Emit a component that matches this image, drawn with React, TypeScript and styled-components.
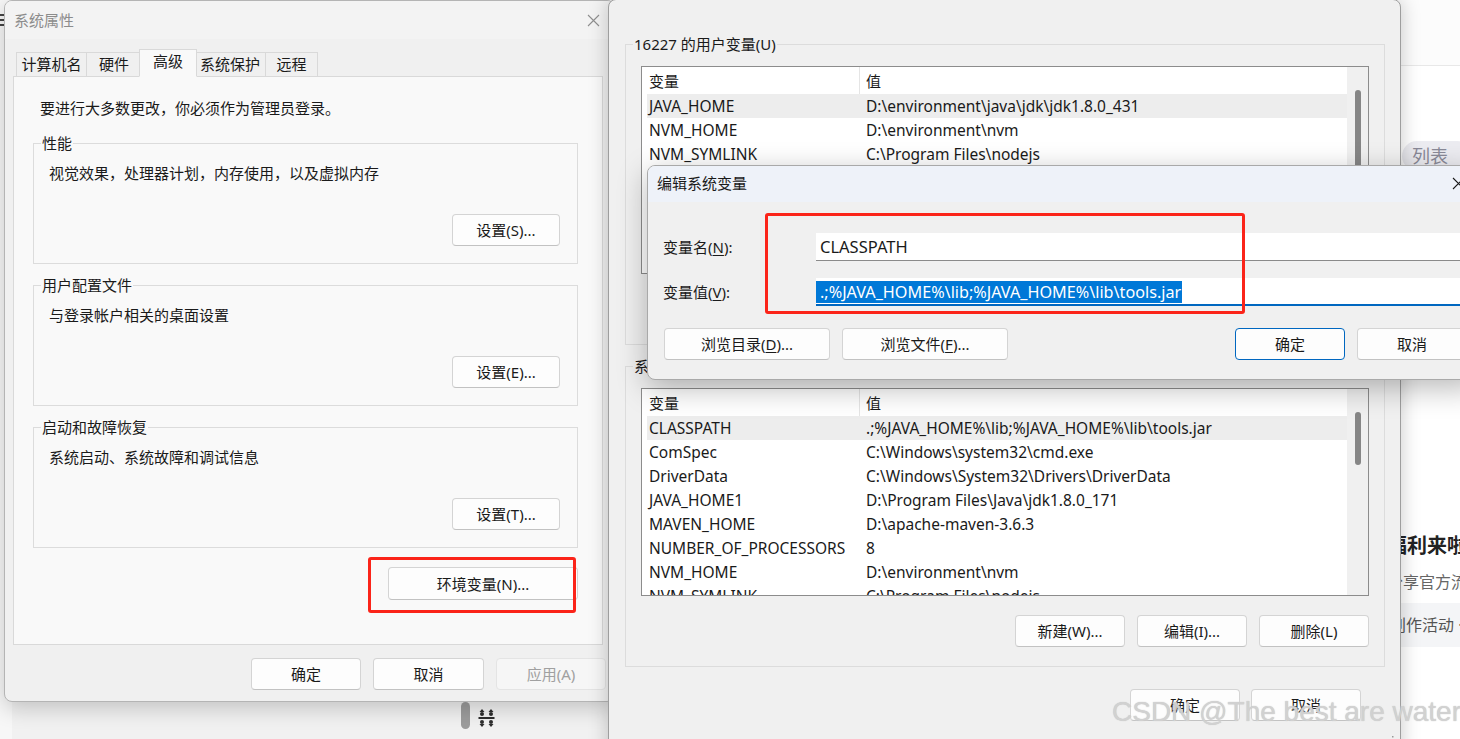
import React from "react";
import styled, { createGlobalStyle } from "styled-components";

const FONT = `"Noto Sans", "Noto Sans CJK SC", sans-serif`;

const GlobalStyle = createGlobalStyle`
  html, body { margin: 0; padding: 0; overflow: hidden; }
  body { font-family: ${FONT}; font-size: 15px; color: #1a1a1a; background: #f2f2f2; }
  * { box-sizing: border-box; }
`;

const Desktop = styled.div`
  position: relative;
  width: 1460px;
  height: 739px;
  overflow: hidden;
  background: #f1f1f1;
  font-family: ${FONT};
  font-size: 15px;
  line-height: 20px;
  color: #1a1a1a;
`;

/* ---------- web page behind the dialogs ---------- */
const WebPage = styled.div`
  position: absolute;
  inset: 0;
  display: flex;
  justify-content: space-between;
`;

const LeftStrip = styled.div`
  width: 12px;
  padding-top: 11px;
  background: #f7f7f7;
`;

const RightStrip = styled.div`
  width: 73px;
  background: #ffffff;
  display: flex;
  flex-direction: column;
  overflow: hidden;
`;

const StripHeader = styled.div`
  height: 66px;
  flex: none;
  border-bottom: 1px solid #e8e8e8;
  background: #fcfcfc;
`;

const Pill = styled.div`
  margin: 75px 0 0 15px;
  width: 70px;
  height: 30px;
  flex: none;
  border-radius: 15px;
  background: #ececf1;
  color: #8a8a98;
  font-size: 18px;
  line-height: 30px;
  padding-left: 10px;
  white-space: nowrap;
`;

const PromoTitle = styled.div`
  margin-top: 362px;
  font-size: 20px;
  line-height: 26px;
  font-weight: 700;
  color: #222;
  white-space: nowrap;
`;

const PromoText = styled.div`
  margin-top: 12px;
  font-size: 16px;
  line-height: 22px;
  color: #666;
  white-space: nowrap;
`;

const PromoBand = styled.div`
  margin-top: 10px;
  height: 44px;
  background: #f4f5f7;
  font-size: 16px;
  line-height: 44px;
  color: #555;
  padding-left: 3px;
  white-space: nowrap;
`;

const Fragment = styled.div<{ $x: number; $y: number }>`
  position: absolute;
  left: ${(p) => p.$x}px;
  top: ${(p) => p.$y}px;
`;

const GrayBar = styled.div`
  width: 9px;
  height: 27px;
  border-radius: 5px;
  background: #9c9c9c;
`;

/* ---------- shared window parts ---------- */
const Underline = styled.span`
  text-decoration: underline;
  text-underline-offset: 2px;
`;

const Button = styled.button<{ $w: number; $h?: number; $default?: boolean; $disabled?: boolean }>`
  width: ${(p) => p.$w}px;
  height: ${(p) => p.$h ?? 32}px;
  flex: none;
  display: inline-flex;
  align-items: center;
  justify-content: center;
  padding: 0;
  margin: 0;
  font-family: ${FONT};
  font-size: 15px;
  line-height: 20px;
  white-space: nowrap;
  color: ${(p) => (p.$disabled ? "#a0a0a0" : "#1a1a1a")};
  background: ${(p) => (p.$disabled ? "#f6f6f6" : "#fdfdfd")};
  border: 1px solid ${(p) => (p.$default ? "#0067c0" : p.$disabled ? "#e4e4e4" : "#d4d4d4")};
  border-bottom-color: ${(p) => (p.$default ? "#0067c0" : p.$disabled ? "#e4e4e4" : "#c2c2c2")};
  border-radius: 4px;
`;

const GroupBox = styled.fieldset<{ $pr?: number; $pb?: number }>`
  margin: 0;
  min-width: 0;
  border: 1px solid #dcdcdc;
  padding: 0 ${(p) => p.$pr ?? 17}px ${(p) => p.$pb ?? 16}px 15px;
  display: flex;
  flex-direction: column;
`;

const GroupLegend = styled.legend`
  margin-left: -8px;
  padding: 0 1px;
  font-size: 15px;
  line-height: 20px;
  color: #1a1a1a;
`;

const CloseX = ({ color }: { color: string }) => (
  <svg width="13" height="13" viewBox="0 0 13 13">
    <path d="M1 1 L12 12 M12 1 L1 12" stroke={color} strokeWidth="1.1" fill="none" />
  </svg>
);

const CloseButton = styled.div<{ $w: number }>`
  width: ${(p) => p.$w}px;
  height: 100%;
  display: flex;
  align-items: center;
  justify-content: center;
  flex: none;
`;

const RedFrame = styled.div<{ $x: number; $y: number; $w: number; $h: number }>`
  position: absolute;
  left: ${(p) => p.$x}px;
  top: ${(p) => p.$y}px;
  width: ${(p) => p.$w}px;
  height: ${(p) => p.$h}px;
  border: 3px solid #fb2419;
  border-radius: 3px;
  pointer-events: none;
  z-index: 5;
`;

/* ---------- 系统属性 ---------- */
const SysWindow = styled.div`
  position: absolute;
  left: 4px;
  top: 0;
  width: 611px;
  height: 702px;
  background: #f0f0f0;
  border: 1px solid #b4b4b4;
  border-radius: 8px;
  box-shadow: 0 6px 22px rgba(0, 0, 0, 0.2);
  display: flex;
  flex-direction: column;
  overflow: hidden;
`;

const SysTitleBar = styled.div`
  height: 38px;
  flex: none;
  display: flex;
  align-items: center;
  justify-content: space-between;
  padding-left: 9px;
  background: #f3f3f3;
  color: #8c8c8c;
`;

const TabStrip = styled.div`
  display: flex;
  align-items: flex-end;
  height: 28px;
  margin: 10px 0 -1px 11px;
  position: relative;
  z-index: 2;
`;

const Tab = styled.div<{ $w: number; $active?: boolean }>`
  width: ${(p) => p.$w}px;
  height: ${(p) => (p.$active ? 28 : 25)}px;
  margin: 0 ${(p) => (p.$active ? -2 : 0)}px 0 ${(p) => (p.$active ? -3 : -1)}px;
  &:first-child { margin-left: 0; }
  position: relative;
  z-index: ${(p) => (p.$active ? 2 : 1)};
  display: flex;
  align-items: center;
  justify-content: center;
  padding-bottom: ${(p) => (p.$active ? 4 : 1)}px;
  border: 1px solid #d9d9d9;
  border-bottom: ${(p) => (p.$active ? "1px solid #f9f9f9" : "1px solid #d9d9d9")};
  background: ${(p) => (p.$active ? "#f9f9f9" : "#f0f0f0")};
  white-space: nowrap;
`;

const TabPanel = styled.div`
  height: 569px;
  flex: none;
  margin: 0 11px 0 8px;
  border: 1px solid #d9d9d9;
  background: #f9f9f9;
  padding: 21px 24px 0 19px;
  display: flex;
  flex-direction: column;
`;

const Notice = styled.div`
  margin-left: 7px;
  margin-bottom: 15px;
`;

const GroupStack = styled.div`
  display: flex;
  flex-direction: column;
  gap: 11px;
`;

const GroupDesc = styled.div`
  margin-top: 10px;
`;

const GroupAction = styled.div`
  margin-top: 31px;
  display: flex;
  justify-content: flex-end;
`;

const EnvRow = styled.div`
  margin-top: 19px;
  display: flex;
  justify-content: flex-end;
`;

const SysFooter = styled.div`
  margin-top: 13px;
  display: flex;
  justify-content: flex-end;
  gap: 12px;
  padding-right: 8px;
`;

/* ---------- 环境变量 ---------- */
const EnvWindow = styled.div`
  position: absolute;
  left: 608px;
  top: -1px;
  width: 793px;
  height: 760px;
  background: #f0f0f0;
  border: 1px solid #9e9e9e;
  border-radius: 8px;
  box-shadow: 0 0 20px rgba(0, 0, 0, 0.22);
  padding: 34px 15px 0 16px;
  display: flex;
  flex-direction: column;
  z-index: 3;
`;

const EnvGroups = styled.div`
  display: flex;
  flex-direction: column;
  gap: 11px;
`;

const ListBox = styled.div`
  margin-top: 12px;
  height: 208px;
  flex: none;
  border: 1px solid #8c8c8c;
  background: #ffffff;
  display: grid;
  grid-template-columns: 1fr 21px;
  overflow: hidden;
`;

const ListMain = styled.div`
  display: flex;
  flex-direction: column;
  min-width: 0;
  overflow: hidden;
`;

const ListHeader = styled.div`
  display: grid;
  grid-template-columns: 217px 1fr;
  height: 27px;
  flex: none;
`;

const HeaderCell = styled.div<{ $divider?: boolean }>`
  display: flex;
  align-items: center;
  padding-left: ${(p) => (p.$divider ? 6 : 7)}px;
  border-left: ${(p) => (p.$divider ? "1px solid #e5e5e5" : "none")};
`;

const Row = styled.div<{ $selected?: boolean }>`
  display: grid;
  grid-template-columns: 212px 1fr;
  height: 24px;
  flex: none;
  align-items: center;
  margin-left: 5px;
  font-size: 15.5px;
  background: ${(p) => (p.$selected ? "#ededed" : "transparent")};
  white-space: nowrap;
`;

const NameCell = styled.div`
  padding-left: 2px;
  overflow: hidden;
`;

const ValueCell = styled.div`
  padding-left: 7px;
  overflow: hidden;
`;

const ScrollTrack = styled.div`
  background: #f0f0f0;
  padding: 23px 0 0 8px;
`;

const ScrollThumb = styled.div<{ $h: number }>`
  width: 6px;
  height: ${(p) => p.$h}px;
  border-radius: 3px;
  background: #868686;
`;

const GroupButtons = styled.div`
  margin-top: 19px;
  display: flex;
  justify-content: flex-end;
  gap: 12px;
`;

const EnvFooter = styled.div`
  margin-top: 22px;
  display: flex;
  justify-content: flex-end;
  gap: 11px;
  padding-right: 24px;
`;

const Grip = styled.div`
  position: absolute;
  right: 6px;
  top: 728px;
`;

/* ---------- 编辑系统变量 ---------- */
const EditWindow = styled.div`
  position: absolute;
  left: 647px;
  top: 165px;
  width: 833px;
  height: 215px;
  background: #f0f0f0;
  border: 1px solid #a9a9a9;
  border-radius: 8px;
  box-shadow: 0 8px 30px rgba(0, 0, 0, 0.28);
  display: flex;
  flex-direction: column;
  overflow: hidden;
  z-index: 4;
`;

const EditTitleBar = styled.div`
  height: 36px;
  flex: none;
  background: #eef2f9;
  padding-left: 9px;
  padding-bottom: 2px;
  display: flex;
  align-items: center;
  justify-content: space-between;
`;

const EditBody = styled.div`
  padding: 31px 12px 0 15px;
  display: flex;
  flex-direction: column;
`;

const FormGrid = styled.div`
  display: grid;
  grid-template-columns: 153px 1fr;
  row-gap: 17px;
  align-items: center;
`;

const Field = styled.div<{ $focused?: boolean }>`
  height: 28px;
  background: #ffffff;
  border-bottom: ${(p) => (p.$focused ? "2px solid #0067c0" : "1px solid #8a8a8a")};
  display: flex;
  align-items: center;
  padding-left: ${(p) => (p.$focused ? 0 : 4)}px;
  font-size: ${(p) => (p.$focused ? 16.2 : 16.5)}px;
  white-space: nowrap;
  overflow: hidden;
`;

const Selection = styled.span`
  display: inline-block;
  background: #0078d7;
  color: #ffffff;
  line-height: 22px;
  padding: 0 1px 0 4px;
  margin-top: 1px;
`;

const EditButtons = styled.div`
  margin-top: 22px;
  padding-left: 1px;
  display: flex;
  gap: 12px;
`;

const Spacer = styled.div`
  flex: 1;
`;

const Watermark = styled.div`
  position: absolute;
  left: 1112px;
  top: 695px;
  z-index: 10;
  font-family: "Liberation Sans", Arial, sans-serif;
  font-size: 28px;
  line-height: 34px;
  color: rgba(214, 214, 214, 0.85);
  text-shadow: 0 0 1px rgba(120, 120, 120, 0.55), 0 0 2px rgba(255, 255, 255, 0.9);
  white-space: nowrap;
  pointer-events: none;
`;

/* ---------- data ---------- */
type Var = { name: string; value: string };

const userVars: Var[] = [
  { name: "JAVA_HOME", value: "D:\\environment\\java\\jdk\\jdk1.8.0_431" },
  { name: "NVM_HOME", value: "D:\\environment\\nvm" },
  { name: "NVM_SYMLINK", value: "C:\\Program Files\\nodejs" },
  { name: "OneDrive", value: "C:\\Users\\16227\\OneDrive" },
  { name: "Path", value: "C:\\Users\\16227\\AppData\\Local\\Microsoft\\WindowsApps;" },
  { name: "TEMP", value: "C:\\Users\\16227\\AppData\\Local\\Temp" },
  { name: "TMP", value: "C:\\Users\\16227\\AppData\\Local\\Temp" },
];

const sysVars: Var[] = [
  { name: "CLASSPATH", value: ".;%JAVA_HOME%\\lib;%JAVA_HOME%\\lib\\tools.jar" },
  { name: "ComSpec", value: "C:\\Windows\\system32\\cmd.exe" },
  { name: "DriverData", value: "C:\\Windows\\System32\\Drivers\\DriverData" },
  { name: "JAVA_HOME1", value: "D:\\Program Files\\Java\\jdk1.8.0_171" },
  { name: "MAVEN_HOME", value: "D:\\apache-maven-3.6.3" },
  { name: "NUMBER_OF_PROCESSORS", value: "8" },
  { name: "NVM_HOME", value: "D:\\environment\\nvm" },
  { name: "NVM_SYMLINK", value: "C:\\Program Files\\nodejs" },
];

const VarList = ({ vars, thumb }: { vars: Var[]; thumb: number }) => (
  <ListBox>
    <ListMain>
      <ListHeader>
        <HeaderCell>变量</HeaderCell>
        <HeaderCell $divider>值</HeaderCell>
      </ListHeader>
      {vars.map((v, i) => (
        <Row key={v.name + i} $selected={i === 0}>
          <NameCell>{v.name}</NameCell>
          <ValueCell>{v.value}</ValueCell>
        </Row>
      ))}
    </ListMain>
    <ScrollTrack>
      <ScrollThumb $h={thumb} />
    </ScrollTrack>
  </ListBox>
);

const settingsGroups = [
  { title: "性能", desc: "视觉效果，处理器计划，内存使用，以及虚拟内存", btn: "设置(S)..." },
  { title: "用户配置文件", desc: "与登录帐户相关的桌面设置", btn: "设置(E)..." },
  { title: "启动和故障恢复", desc: "系统启动、系统故障和调试信息", btn: "设置(T)..." },
];

const tabs = [
  { label: "计算机名", w: 71 },
  { label: "硬件", w: 56 },
  { label: "高级", w: 58, active: true },
  { label: "系统保护", w: 72 },
  { label: "远程", w: 53 },
];

const Hamburger = () => (
  <svg width="14" height="14" viewBox="0 0 14 14" style={{ marginLeft: -9 }}>
    <path d="M0 2h14M0 7h14M0 12h14" stroke="#444" strokeWidth="2" />
  </svg>
);

const DragIcon = () => (
  <svg width="17" height="20" viewBox="0 0 17 20">
    <path d="M4 1 L1.5 4 H6.5 Z M13 1 L10.5 4 H15.5 Z" fill="#2d2d2d" />
    <circle cx="4" cy="6" r="2" fill="#2d2d2d" />
    <circle cx="13" cy="6" r="2" fill="#2d2d2d" />
    <rect x="0.5" y="9" width="16" height="2" fill="#2d2d2d" />
    <circle cx="4" cy="14" r="2" fill="#2d2d2d" />
    <circle cx="13" cy="14" r="2" fill="#2d2d2d" />
    <path d="M4 19 L1.5 16 H6.5 Z M13 19 L10.5 16 H15.5 Z" fill="#2d2d2d" />
  </svg>
);

const ResizeGrip = () => (
  <svg width="10" height="10" viewBox="0 0 10 10">
    {[
      [8, 2],
      [8, 5],
      [5, 5],
      [8, 8],
      [5, 8],
      [2, 8],
    ].map(([x, y], i) => (
      <rect key={i} x={x} y={y} width="1.5" height="1.5" fill="#9a9a9a" />
    ))}
  </svg>
);

export default function App() {
  return (
    <Desktop>
      <GlobalStyle />

      <WebPage>
        <LeftStrip>
          <Hamburger />
        </LeftStrip>
        <RightStrip>
          <StripHeader />
          <Pill>列表</Pill>
          <PromoTitle>福利来啦</PromoTitle>
          <PromoText>分享官方流量</PromoText>
          <PromoBand>创作活动 ·</PromoBand>
        </RightStrip>
      </WebPage>
      <Fragment $x={461} $y={702}>
        <GrayBar />
      </Fragment>
      <Fragment $x={478} $y={708}>
        <DragIcon />
      </Fragment>

      {/* 系统属性 */}
      <SysWindow>
        <SysTitleBar>
          <span>系统属性</span>
          <CloseButton $w={42}>
            <CloseX color="#8f8f8f" />
          </CloseButton>
        </SysTitleBar>
        <TabStrip>
          {tabs.map((t) => (
            <Tab key={t.label} $w={t.w} $active={t.active}>
              {t.label}
            </Tab>
          ))}
        </TabStrip>
        <TabPanel>
          <Notice>要进行大多数更改，你必须作为管理员登录。</Notice>
          <GroupStack>
            {settingsGroups.map((g) => (
              <GroupBox key={g.title} $pb={17}>
                <GroupLegend>{g.title}</GroupLegend>
                <GroupDesc>{g.desc}</GroupDesc>
                <GroupAction>
                  <Button $w={108}>{g.btn}</Button>
                </GroupAction>
              </GroupBox>
            ))}
          </GroupStack>
          <EnvRow>
            <Button $w={190} $h={33}>
              环境变量(N)...
            </Button>
          </EnvRow>
        </TabPanel>
        <SysFooter>
          <Button $w={110}>确定</Button>
          <Button $w={111}>取消</Button>
          <Button $w={110} $disabled>
            应用(A)
          </Button>
        </SysFooter>
        <RedFrame $x={363} $y={556} $w={208} $h={56} />
      </SysWindow>

      {/* 环境变量 */}
      <EnvWindow>
        <EnvGroups>
          <GroupBox $pr={15} $pb={19}>
            <GroupLegend>16227 的用户变量(U)</GroupLegend>
            <VarList vars={userVars} thumb={120} />
            <GroupButtons>
              <Button $w={110}>新建(N)...</Button>
              <Button $w={110}>编辑(E)...</Button>
              <Button $w={110}>删除(D)</Button>
            </GroupButtons>
          </GroupBox>
          <GroupBox $pr={15} $pb={19}>
            <GroupLegend>系统变量(S)</GroupLegend>
            <VarList vars={sysVars} thumb={53} />
            <GroupButtons>
              <Button $w={110}>新建(W)...</Button>
              <Button $w={110}>编辑(I)...</Button>
              <Button $w={110}>删除(L)</Button>
            </GroupButtons>
          </GroupBox>
        </EnvGroups>
        <EnvFooter>
          <Button $w={110}>确定</Button>
          <Button $w={110}>取消</Button>
        </EnvFooter>
        <Grip>
          <ResizeGrip />
        </Grip>
      </EnvWindow>

      {/* 编辑系统变量 */}
      <EditWindow>
        <EditTitleBar>
          <span>编辑系统变量</span>
          <CloseButton $w={42}>
            <CloseX color="#1a1a1a" />
          </CloseButton>
        </EditTitleBar>
        <EditBody>
          <FormGrid>
            <span>
              变量名(<Underline>N</Underline>):
            </span>
            <Field>CLASSPATH</Field>
            <span>
              变量值(<Underline>V</Underline>):
            </span>
            <Field $focused>
              <Selection>.;%JAVA_HOME%\lib;%JAVA_HOME%\lib\tools.jar</Selection>
            </Field>
          </FormGrid>
          <EditButtons>
            <Button $w={166}>
              浏览目录(<Underline>D</Underline>)...
            </Button>
            <Button $w={166}>
              浏览文件(<Underline>F</Underline>)...
            </Button>
            <Spacer />
            <Button $w={110} $default>
              确定
            </Button>
            <Button $w={110}>取消</Button>
          </EditButtons>
        </EditBody>
        <RedFrame $x={117} $y={47} $w={480} $h={101} />
      </EditWindow>

      <Watermark>CSDN @The best are water</Watermark>
    </Desktop>
  );
}
